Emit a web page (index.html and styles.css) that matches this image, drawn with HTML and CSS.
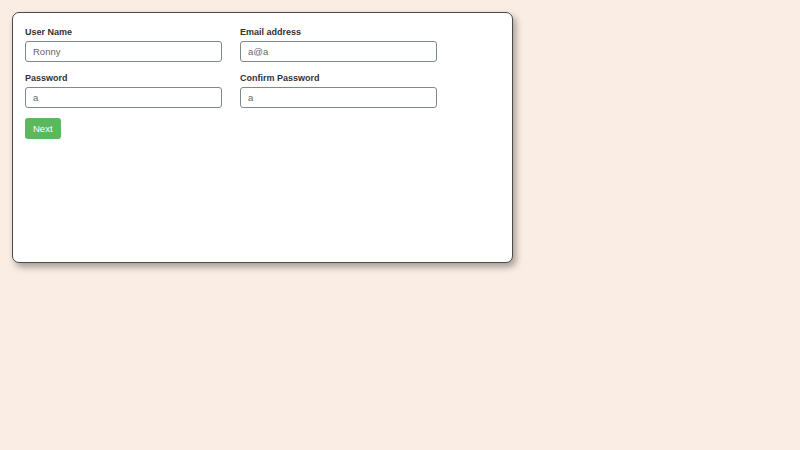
FILE: index.html
```html
<!DOCTYPE html>
<html lang="en">
<head>
  <meta charset="UTF-8" />
  <meta name="viewport" content="width=device-width, initial-scale=1.0" />
  <title>Sign Up</title>
  <link rel="stylesheet" href="styles.css">
</head>
<body>
  <form class="signup-card">
    <div class="form-grid">
      <div class="field">
        <label for="username">User Name</label>
        <input type="text" id="username" value="Ronny" />
      </div>
      <div class="field">
        <label for="email">Email address</label>
        <input type="text" id="email" value="a@a" />
      </div>
      <div class="field">
        <label for="password">Password</label>
        <input type="text" id="password" value="a" />
      </div>
      <div class="field">
        <label for="confirm">Confirm Password</label>
        <input type="text" id="confirm" value="a" />
      </div>
    </div>
    <button type="button" class="next-button">Next</button>
  </form>
</body>
</html>
```

FILE: styles.css
```css
body {
  font-family: 'Liberation Sans', Arial, Helvetica, sans-serif;
  background: #faeee4;
  color: #333;
  margin: 0;
  padding: 12px;
}
.signup-card {
  box-sizing: border-box;
  width: 501px;
  height: 251px;
  padding: 13px 12px 12px;
  background: #fff;
  border: 1px solid #4a4a4a;
  border-radius: 7px;
  box-shadow: 3px 4px 7px rgba(0, 0, 0, 0.35);
}
.form-grid {
  display: grid;
  grid-template-columns: repeat(2, 197px);
  column-gap: 18px;
  row-gap: 10px;
}
.field label {
  display: block;
  margin-bottom: 3px;
  font-size: 9px;
  font-weight: bold;
  line-height: 12px;
  color: #333;
}
.field input {
  display: block;
  box-sizing: border-box;
  width: 197px;
  height: 21px;
  padding: 0 7px;
  font-family: inherit;
  font-size: 9.5px;
  color: #666;
  border: 1px solid #7f8a81;
  border-radius: 3px;
  outline: none;
}
.next-button {
  margin-top: 10px;
  height: 21px;
  padding: 0 8px;
  font-family: inherit;
  font-size: 9.5px;
  color: #fff;
  background: #5cb85c;
  border: none;
  border-radius: 3px;
  cursor: pointer;
}
```
